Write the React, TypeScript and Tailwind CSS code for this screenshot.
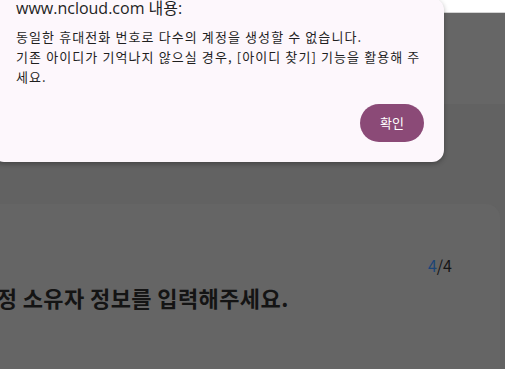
import React from "react";

const kr = { fontFamily: '"Noto Sans CJK KR", "Noto Sans", sans-serif' };

export default function App() {
  return (
    <div className="relative w-[505px] h-[369px] overflow-hidden bg-[#626262]" style={kr}>
      {/* page under the dimmed overlay */}
      <div className="h-[13px] bg-white border-b border-[#d4d4d4]" />
      <div className="h-[91px] bg-[#666666]" />
      <div className="mt-[100px] -ml-[40px] mr-[5px] h-[200px] rounded-tr-[14px] rounded-tl-[14px] bg-[#656565] pr-[48px]">
        <div className="pt-[50px] flex justify-end text-[16px] leading-[22px] text-[#151515]">
          <span className="text-[#1b4577]">4</span>/4
        </div>
        <h2 className="mt-[5px] pl-[16px] text-[22px] leading-[32px] font-bold text-[#141414] tracking-[0.4px]">
          계정 소유자 정보를 입력해주세요.
        </h2>
      </div>

      {/* browser alert dialog */}
      <div className="absolute -top-[2px] -left-[8px] w-[452px] rounded-[12px] bg-[#fdf7fc] pl-[24px] pr-[20px] pb-[20px] shadow-[0_2px_5px_rgba(0,0,0,0.3)]">
        <div className="text-[16px] leading-[21px] text-[#1f1f1f]" style={{ fontFamily: '"Open Sans", "Noto Sans CJK KR", sans-serif' }}>
          www.ncloud.com 내용:
        </div>
        <p className="mt-[8px] text-[13px] leading-[20px] tracking-[1.1px] text-[#1f1f1f]">
          동일한 휴대전화 번호로 다수의 계정을 생성할 수 없습니다.
          <br />
          기존 아이디가 기억나지 않으실 경우, [아이디 찾기] 기능을 활용해 주
          <br />
          세요.
        </p>
        <div className="mt-[17px] flex justify-end">
          <button className="w-[64px] h-[38px] rounded-full bg-[#8b4a77] text-white text-[13px]">
            확인
          </button>
        </div>
      </div>
    </div>
  );
}
